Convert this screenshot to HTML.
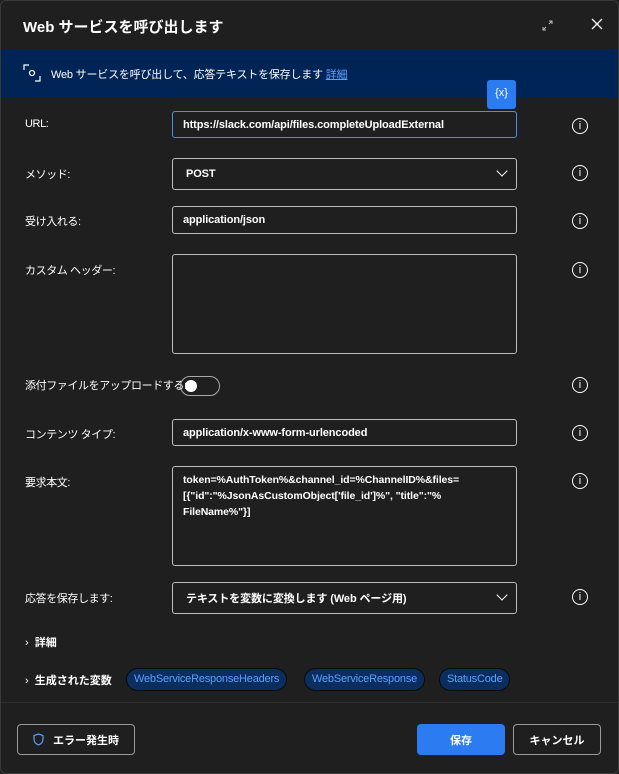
<!DOCTYPE html>
<html><head><meta charset="utf-8"><style>
*{box-sizing:border-box;margin:0;padding:0}
body{width:619px;height:774px;background:#202020;font-family:"Liberation Sans","Noto Sans CJK JP",sans-serif;color:#fff;position:relative;overflow:hidden;font-size:12px}
.win{position:absolute;left:0;top:0;width:619px;height:774px;background:#201f1f;border:1px solid #3a3a3a;border-radius:6px}
.a{position:absolute}
.lbl{position:absolute;left:24px;font-size:11px;letter-spacing:-0.4px;color:#fff}
.inp{position:absolute;left:171px;width:345px;border:1px solid #bdbdbd;border-radius:3px;font-size:11px;font-weight:bold;padding-left:10px;display:flex;align-items:center;letter-spacing:-0.1px}
.info{position:absolute;left:571px;width:16px;height:16px;border:1.2px solid #fff;border-radius:50%;font-size:11px;text-align:center;line-height:14px;font-family:"Liberation Sans",sans-serif}
.pill{position:absolute;top:667px;height:23px;background:#0b2e5e;border:1px solid #0a0a0a;border-radius:12px;color:#5aa0ff;font-size:11px;line-height:21px;padding:0 7px;letter-spacing:-0.2px}
.btn{position:absolute;top:723px;height:31px;border:1px solid #9a9a9a;border-radius:4px;font-size:12px;font-weight:bold;display:flex;align-items:center;justify-content:center}
.chev{position:absolute;width:8px;height:8px;border-right:1.5px solid #fff;border-bottom:1.5px solid #fff;transform:rotate(45deg)}
</style></head><body><div class="win">
<div class="a" style="left:22px;top:15px;font-size:15px;font-weight:bold">Web サービスを呼び出します</div>
<svg class="a" style="left:541px;top:19px" width="11" height="11" viewBox="0 0 11 11" fill="none" stroke="#bbb" stroke-width="1"><path d="M1 10L4 7M10 1L7 4M7 1h3v3M1 7v3h3"/></svg>
<svg class="a" style="left:590px;top:17px" width="12" height="12" viewBox="0 0 12 12" stroke="#fff" stroke-width="1.3"><path d="M1 1L11 11M11 1L1 11"/></svg>
<div class="a" style="left:0;top:48px;width:617px;height:49px;background:#002456"></div>
<svg class="a" style="left:22px;top:63px" width="18" height="18" viewBox="0 0 18 18" fill="none" stroke="#fff" stroke-width="1.2"><path d="M1 6V1h5"/><circle cx="9" cy="9" r="2.5"/><path d="M12 17h5v-5"/></svg>
<div class="a" style="left:50px;top:65px;font-size:11px;letter-spacing:-0.2px">Web サービスを呼び出して、応答テキストを保存します <span style="color:#5aa0ff;text-decoration:underline">詳細</span></div>
<div class="a" style="left:486px;top:79px;width:29px;height:29px;background:#2b7cf0;border-radius:3px;font-size:11px;text-align:center;line-height:27px">{x}</div>

<div class="lbl" style="top:117px">URL:</div>
<div class="inp" style="top:110px;height:27px;border-color:#4a8ff0">https://slack.com/api/files.completeUploadExternal</div>
<div class="info" style="top:117px">i</div>

<div class="lbl" style="top:165px">メソッド:</div>
<div class="inp" style="top:157px;height:32px">&nbsp;POST</div>
<div class="chev" style="left:497px;top:166px"></div>
<div class="info" style="top:164px">i</div>

<div class="lbl" style="top:212px">受け入れる:</div>
<div class="inp" style="top:205px;height:28px">application/json</div>
<div class="info" style="top:212px">i</div>

<div class="lbl" style="top:261px">カスタム ヘッダー:</div>
<div class="inp" style="top:253px;height:100px"></div>
<div class="info" style="top:261px">i</div>

<div class="lbl" style="top:376px">添付ファイルをアップロードする:</div>
<div class="a" style="left:179px;top:375px;width:40px;height:20px;border:1px solid #aaa;border-radius:10px"></div>
<div class="a" style="left:184px;top:379px;width:12px;height:12px;background:#fff;border-radius:50%"></div>
<div class="info" style="top:376px">i</div>

<div class="lbl" style="top:425px">コンテンツ タイプ:</div>
<div class="inp" style="top:418px;height:27px">application/x-www-form-urlencoded</div>
<div class="info" style="top:424px">i</div>

<div class="lbl" style="top:473px">要求本文:</div>
<div class="inp" style="top:465px;height:100px;align-items:flex-start;padding-top:5px;line-height:16px;white-space:nowrap;font-size:10.5px">token=%AuthToken%&amp;channel_id=%ChannelID%&amp;files=<br>[{"id":"%JsonAsCustomObject['file_id']%", "title":"%<br>FileName%"}]</div>
<div class="info" style="top:472px">i</div>

<div class="lbl" style="top:589px">応答を保存します:</div>
<div class="inp" style="top:581px;height:32px">&nbsp;テキストを変数に変換します (Web ページ用)</div>
<div class="chev" style="left:497px;top:590px"></div>
<div class="info" style="top:588px">i</div>

<div class="a" style="left:24px;top:633px;font-size:11px">›&nbsp; <b>詳細</b></div>
<div class="a" style="left:24px;top:671px;font-size:11px">›&nbsp; <b>生成された変数</b></div>
<div class="pill" style="left:125px">WebServiceResponseHeaders</div>
<div class="pill" style="left:303px">WebServiceResponse</div>
<div class="pill" style="left:438px">StatusCode</div>
<div class="a" style="left:0;top:701px;width:617px;height:1px;background:#2e2e2e"></div>

<div class="btn" style="left:16px;width:118px;font-size:11px"><svg width="11" height="13" viewBox="0 0 11 13" fill="none" stroke="#5aa0ff" stroke-width="1.2" style="margin-right:9px"><path d="M5.5 1L10 2.5V6c0 3-2 5-4.5 6C3 11 1 9 1 6V2.5z"/></svg>エラー発生時</div>
<div class="btn" style="left:416px;width:88px;background:#2b7cf0;border-color:#2b7cf0;font-size:11px">保存</div>
<div class="btn" style="left:512px;width:88px;font-size:11px">キャンセル</div>
</div></body></html>
